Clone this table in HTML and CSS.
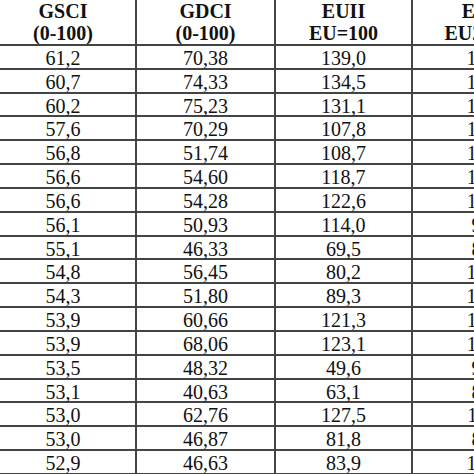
FILE: index.html
```html
<!DOCTYPE html>
<html lang="en">
<head>
<meta charset="utf-8">
<title>Index table</title>
<link rel="stylesheet" href="styles.css">
</head>
<body>
<table class="data">
  <colgroup>
    <col class="c1"><col class="c2"><col class="c3"><col class="c4">
  </colgroup>
  <thead>
    <tr><th>GSCI<br>(0-100)</th><th>GDCI<br>(0-100)</th><th>EUII<br>EU=100</th><th>EUSII<br>EU28=100</th></tr>
  </thead>
  <tbody>
    <tr><td>61,2</td><td>70,38</td><td>139,0</td><td>136,4</td></tr>
    <tr><td>60,7</td><td>74,33</td><td>134,5</td><td>128,7</td></tr>
    <tr><td>60,2</td><td>75,23</td><td>131,1</td><td>125,2</td></tr>
    <tr><td>57,6</td><td>70,29</td><td>107,8</td><td>112,9</td></tr>
    <tr><td>56,8</td><td>51,74</td><td>108,7</td><td>110,3</td></tr>
    <tr><td>56,6</td><td>54,60</td><td>118,7</td><td>117,5</td></tr>
    <tr><td>56,6</td><td>54,28</td><td>122,6</td><td>119,8</td></tr>
    <tr><td>56,1</td><td>50,93</td><td>114,0</td><td>98,6</td></tr>
    <tr><td>55,1</td><td>46,33</td><td>69,5</td><td>84,2</td></tr>
    <tr><td>54,8</td><td>56,45</td><td>80,2</td><td>102,1</td></tr>
    <tr><td>54,3</td><td>51,80</td><td>89,3</td><td>104,6</td></tr>
    <tr><td>53,9</td><td>60,66</td><td>121,3</td><td>115,0</td></tr>
    <tr><td>53,9</td><td>68,06</td><td>123,1</td><td>116,7</td></tr>
    <tr><td>53,5</td><td>48,32</td><td>49,6</td><td>93,4</td></tr>
    <tr><td>53,1</td><td>40,63</td><td>63,1</td><td>86,9</td></tr>
    <tr><td>53,0</td><td>62,76</td><td>127,5</td><td>111,2</td></tr>
    <tr><td>53,0</td><td>46,87</td><td>81,8</td><td>88,5</td></tr>
    <tr><td>52,9</td><td>46,63</td><td>83,9</td><td>101,7</td></tr>
  </tbody>
</table>
</body>
</html>
```
FILE: styles.css
```css
html, body {
  margin: 0;
  padding: 0;
  background: #ffffff;
  overflow: hidden;
}

.data {
  border-collapse: separate;
  border-spacing: 0;
  table-layout: fixed;
  width: 574px;
  margin-left: -9px;
  font-family: "Liberation Serif", "Times New Roman", serif;
  font-size: 20px;
  color: #111111;
}

.c1 { width: 146px; }
.c2 { width: 139px; }
.c3 { width: 137px; }
.c4 { width: 152px; }

.data th,
.data td {
  box-sizing: border-box;
  text-align: center;
  white-space: nowrap;
  border-bottom: 2px solid #444444;
  border-right: 2px solid #444444;
}

.data th:last-child,
.data td:last-child {
  border-right: none;
}

.data th {
  font-weight: bold;
  line-height: 22px;
  padding: 0;
}

.data td {
  font-weight: normal;
  line-height: 17.83px;
  padding: 4px 0 0 0;
}
```
